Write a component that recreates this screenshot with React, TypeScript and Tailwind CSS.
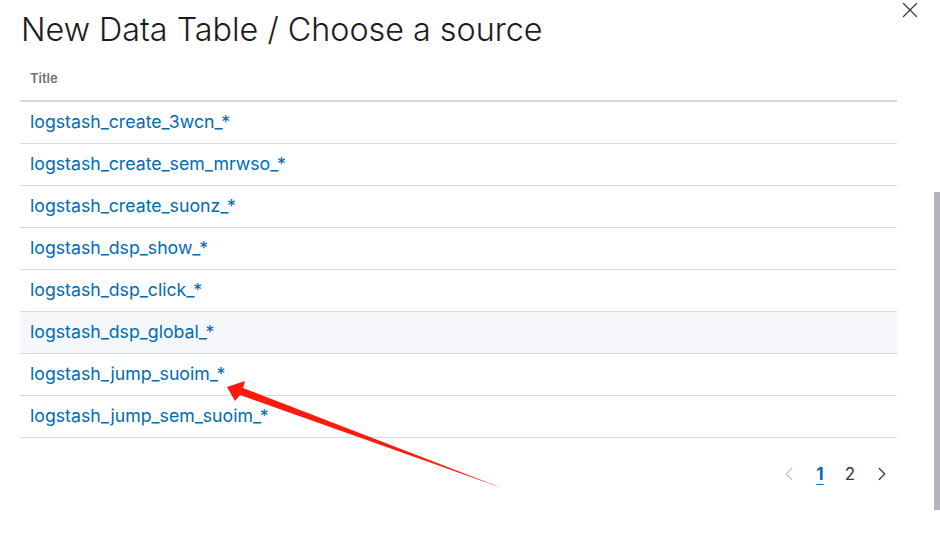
import { X, ChevronLeft, ChevronRight } from "lucide-react";

const sources = [
  "logstash_create_3wcn_*",
  "logstash_create_sem_mrwso_*",
  "logstash_create_suonz_*",
  "logstash_dsp_show_*",
  "logstash_dsp_click_*",
  "logstash_dsp_global_*",
  "logstash_jump_suoim_*",
  "logstash_jump_sem_suoim_*",
];

export default function App() {
  return (
    <div
      className="relative h-[534px] w-[940px] overflow-hidden bg-white"
      style={{ fontFamily: "Inter, 'Noto Sans', sans-serif" }}
    >
      <button className="absolute right-[17px] top-[-3px] text-[#343741]">
        <X className="h-[26px] w-[26px]" strokeWidth={1.1} />
      </button>

      <div className="flex flex-col pl-[20px] pr-[43px]">
        <h1 className="pl-[1px] pt-[8px] text-[32.3px] font-light leading-[44px] text-[#1a1c21]">
          New Data Table / Choose a source
        </h1>

        <table className="mt-[6px] w-full border-collapse">
          <thead>
            <tr className="border-b-2 border-[#d3dae6]">
              <th className="h-[43px] px-[10px] text-left text-[13px] font-semibold text-[#6e7079]">
                Title
              </th>
            </tr>
          </thead>
          <tbody>
            {sources.map((s, i) => (
              <tr
                key={s}
                className={`border-b border-[#d3dae6] ${i === 5 ? "bg-[#f5f7fa]" : ""}`}
              >
                <td className="h-[42px] px-[10px] text-[17.7px] text-[#006bb4]">{s}</td>
              </tr>
            ))}
          </tbody>
        </table>

        <div className="mt-[24px] flex items-center justify-end gap-[11px] pr-[4px] text-[17px]">
          <ChevronLeft className="h-[22px] w-[22px] text-[#c2c3c6]" strokeWidth={1.3} />
          <span className="px-[5px] font-bold text-[#006bb4] underline underline-offset-4">1</span>
          <span className="px-[5px] text-[#343741]">2</span>
          <ChevronRight className="h-[22px] w-[22px] text-[#343741]" strokeWidth={1.3} />
        </div>
      </div>

      {/* scrollbar */}
      <div className="absolute right-0 top-[192px] h-[318px] w-[6px] bg-[#b4b5bc]" />

      {/* annotation arrow */}
      <svg className="absolute left-0 top-0" width="940" height="534">
        <polygon
          points="227,387 245,381 243,388 502,488 240,395 235,401"
          fill="#ff1a0f"
        />
      </svg>
    </div>
  );
}
